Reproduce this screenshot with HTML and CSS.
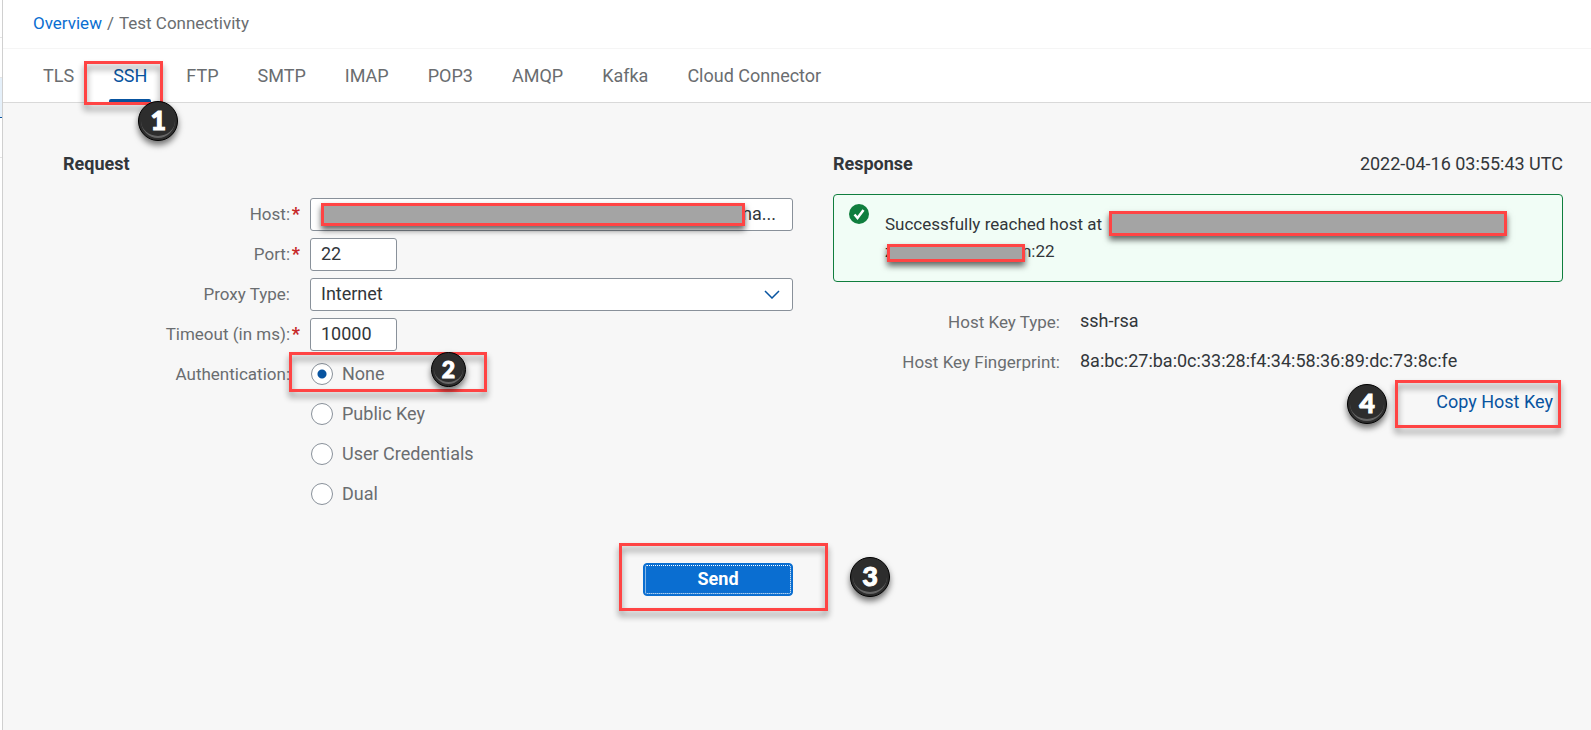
FILE: index.html
```html
<!DOCTYPE html>
<html lang="en">
<head>
<meta charset="utf-8">
<meta name="viewport" content="width=device-width, initial-scale=1">
<title>Test Connectivity</title>
<link rel="stylesheet" href="styles.css">
</head>
<body>
<div class="shell">
  <div class="side">
    <div class="side-item side-item-top"></div>
    <div class="side-item"></div>
    <div class="side-item side-item-active"></div>
    <div class="side-item"></div>
  </div>
  <div class="page">
    <nav class="breadcrumb" aria-label="Breadcrumb">
      <a class="crumb-link" href="#">Overview</a><span>/</span><span>Test Connectivity</span>
    </nav>
    <nav class="tabs" aria-label="Protocols">
      <a class="tab" href="#">TLS</a>
      <a class="tab tab-active" href="#" aria-current="page">SSH<span class="frame frame-tab"></span><span class="badge badge-tab">1</span></a>
      <a class="tab" href="#">FTP</a>
      <a class="tab" href="#">SMTP</a>
      <a class="tab" href="#">IMAP</a>
      <a class="tab" href="#">POP3</a>
      <a class="tab" href="#">AMQP</a>
      <a class="tab" href="#">Kafka</a>
      <a class="tab" href="#">Cloud Connector</a>
    </nav>
    <main class="content">
      <section class="panel">
        <header class="panel-head"><h2 class="panel-title">Request</h2></header>
        <form class="form">
          <label class="label required" for="host">Host:</label>
          <div class="field">
            <input class="input input-host" id="host" type="text" value="ma...">
            <span class="redaction redaction-host"></span>
          </div>
          <label class="label required" for="port">Port:</label>
          <div class="field"><input class="input input-short" id="port" type="text" value="22"></div>
          <label class="label" for="proxy">Proxy Type:</label>
          <div class="field select-wrap">
            <select class="input select" id="proxy"><option>Internet</option></select>
            <svg class="chevron" viewBox="0 0 16 9" aria-hidden="true"><path d="M1 1 8 8l7-7"/></svg>
          </div>
          <label class="label required" for="timeout">Timeout (in ms):</label>
          <div class="field"><input class="input input-short" id="timeout" type="text" value="10000"></div>
          <span class="label" id="auth-label">Authentication:</span>
          <div class="radios" role="radiogroup" aria-labelledby="auth-label">
            <label class="option"><input class="radio" type="radio" name="auth" checked>None</label>
            <label class="option"><input class="radio" type="radio" name="auth">Public Key</label>
            <label class="option"><input class="radio" type="radio" name="auth">User Credentials</label>
            <label class="option"><input class="radio" type="radio" name="auth">Dual</label>
            <span class="frame frame-auth"></span><span class="badge badge-small badge-auth">2</span>
          </div>
          <div class="actions">
            <button class="send" type="button">Send</button>
            <span class="frame frame-send"></span><span class="badge badge-send">3</span>
          </div>
        </form>
      </section>
      <section class="panel">
        <header class="panel-head"><h2 class="panel-title">Response</h2><time datetime="2022-04-16T03:55:43Z">2022-04-16 03:55:43 UTC</time></header>
        <div class="message" role="status">
          <svg class="message-icon" viewBox="0 0 20 20" aria-hidden="true"><circle cx="10" cy="10" r="10"/><path d="m5.5 10.5 3 3.5 6-8"/></svg>
          <div class="message-text">
            <p class="line">Successfully reached host at <span class="redaction redaction-long"></span></p>
            <p class="line">z<span class="redaction redaction-mid"></span>m:22</p>
          </div>
        </div>
        <dl class="details">
          <dt class="label">Host Key Type:</dt><dd class="value">ssh-rsa</dd>
          <dt class="label">Host Key Fingerprint:</dt><dd class="value">8a:bc:27:ba:0c:33:28:f4:34:58:36:89:dc:73:8c:fe</dd>
        </dl>
        <div class="copy-row">
          <button class="copy" type="button">Copy Host Key</button>
          <span class="frame frame-copy"></span><span class="badge badge-copy">4</span>
        </div>
      </section>
    </main>
  </div>
</div>
</body>
</html>
```
FILE: styles.css
```css
* { box-sizing: border-box; }

body {
  margin: 0;
  background: #f7f7f7;
  color: #32363a;
  font: 18px/24px Roboto, "Liberation Sans", sans-serif;
}

.shell { display: flex; min-height: 100vh; }

.side {
  flex: 0 0 3px;
  border-right: 1px solid #d0d0d0;
  background: #fff;
}
.side-item { height: 40px; border-bottom: 1px solid #e5e5e5; }
.side-item-top { height: 38px; }
.side-item-active { background: #e5f0fa; border-color: #0854a0; }

.page { flex: 1; min-width: 0; }

.breadcrumb {
  display: flex;
  align-items: center;
  gap: 5px;
  height: 49px;
  padding: 0 30px 2px;
  border-bottom: 1px solid #f5f5f5;
  background: #fff;
  color: #6a6d70;
  font-size: 17px;
}
.crumb-link { color: #0a6ed1; text-decoration: none; }

.tabs {
  display: flex;
  gap: 31px;
  height: 54px;
  padding: 0 36px;
  border-bottom: 1px solid #d9d9d9;
  background: #fff;
}
.tab {
  position: relative;
  padding: 15px 4px 11px;
  border-bottom: 3px solid transparent;
  color: #6a6d70;
  text-decoration: none;
  white-space: nowrap;
}
.tab-active { color: #0854a0; }
.tab-active::before {
  content: "";
  position: absolute;
  inset: auto 0 -3px;
  height: 3px;
  border-radius: 2px 2px 0 0;
  background: #0854a0;
}

.content {
  display: grid;
  grid-template-columns: repeat(2, minmax(0, 1fr));
  gap: 40px;
  padding: 44px 28px 44px 60px;
}

.panel-head {
  display: flex;
  align-items: center;
  justify-content: space-between;
  height: 33px;
  margin-bottom: 14px;
}
.panel-title { margin: 0; font-size: 18px; font-weight: 700; }

.form, .details {
  display: grid;
  grid-template-columns: minmax(140px, 247px) minmax(0, 1fr);
  row-gap: 7px;
}
.form { padding-top: 4px; }
.details { margin: 24px 0 7px; }

.label {
  position: relative;
  height: 33px;
  padding-right: 20px;
  color: #6a6d70;
  font-size: 17px;
  line-height: 32px;
  text-align: right;
}
.required::after {
  content: "*";
  position: absolute;
  right: 10px;
  color: #c62828;
  font-size: 18px;
  font-weight: 700;
}
.value { margin: 0; line-height: 30px; }
.field { position: relative; height: 33px; }

.input {
  display: block;
  width: 100%;
  height: 33px;
  padding: 0 10px 2px;
  border: 1px solid #89919a;
  border-radius: 3px;
  background: #fff;
  color: #32363a;
  font: inherit;
}
.input-short { width: 87px; }
.input-host { padding-right: 16px; text-align: right; }

.select-wrap { display: grid; align-items: center; }
.select, .chevron { grid-area: 1 / 1; }
.select { appearance: none; }
.chevron {
  justify-self: end;
  width: 16px;
  height: 9px;
  margin-right: 13px;
  fill: none;
  stroke: #0854a0;
  stroke-width: 1.5;
  pointer-events: none;
}

.radios {
  position: relative;
  display: grid;
  row-gap: 7px;
  justify-items: start;
}
.option {
  display: flex;
  align-items: center;
  gap: 9px;
  height: 33px;
  padding-bottom: 1px;
  color: #6a6d70;
}
.radio {
  appearance: none;
  width: 22px;
  height: 22px;
  margin: 0 0 0 1px;
  border: 1px solid #89919a;
  border-radius: 50%;
  background: #fff;
}
.radio:checked { background: radial-gradient(circle, #0854a0 4px, #fff 5px); }

.actions {
  position: relative;
  grid-column: 1 / -1;
  justify-self: end;
  width: 150px;
  margin-top: 45px;
}
.send {
  display: block;
  width: 100%;
  height: 33px;
  padding: 0 0 2px;
  border: 1px solid #0a6ed1;
  border-radius: 4px;
  background: #0a6ed1;
  color: #fff;
  font: inherit;
  font-weight: 700;
  outline: 1px dotted #fff;
  outline-offset: -3px;
}

.message {
  display: flex;
  gap: 16px;
  padding: 9px 15px 16px;
  border: 1px solid #107e3e;
  border-radius: 4px;
  background: #f1fdf6;
}
.message-icon { flex: none; width: 20px; height: 20px; fill: #107e3e; }
.message-icon path { fill: none; stroke: #fff; stroke-width: 2.5; }
.message-text { flex: 1; min-width: 0; padding-top: 7px; }
.line { margin: 0; height: 27px; font-size: 17px; line-height: 27px; white-space: nowrap; }

.copy-row { position: relative; display: flex; justify-content: flex-end; }
.copy {
  height: 33px;
  padding: 0 10px 2px;
  border: 0;
  background: none;
  color: #0854a0;
  font: inherit;
}

/* Walkthrough callouts */
.redaction {
  display: inline-block;
  border: 3px solid #ff4444;
  background: #a4a4a4;
  box-shadow: 0 4px 6px rgba(0, 0, 0, .6);
}
.redaction-host { position: absolute; inset: 5px 48px 5px 11px; }
.redaction-long { width: 398px; height: 25px; margin-left: 3px; vertical-align: -6px; }
.redaction-mid { position: relative; width: 138px; height: 18px; margin: 0 -9px 0 -6px; vertical-align: middle; }

.frame {
  position: absolute;
  border: 3px solid #ff4444;
  filter: drop-shadow(0 5px 3px rgba(0, 0, 0, .45));
  pointer-events: none;
}
.frame-tab { inset: 12px -12px -6px -25px; }
.frame-auth { top: -6px; left: -21px; width: 198px; height: 40px; }
.frame-send { inset: -20px -35px -15px -24px; }
.frame-copy { top: -6px; right: 2px; width: 166px; height: 48px; }

.badge {
  position: absolute;
  display: grid;
  place-items: center;
  width: 40px;
  height: 40px;
  padding-bottom: 2px;
  border: 1px solid #000;
  border-radius: 50%;
  background: #2d2d2d;
  box-shadow: 0 4px 6px rgba(0, 0, 0, .55);
  color: #fff;
  font: 900 27px/28px Lato, sans-serif;
  -webkit-text-stroke: 1px #fff;
}
.badge::after {
  content: "";
  position: absolute;
  inset: 2px;
  border-bottom: 2px solid #666;
  border-radius: 50%;
}
.badge-small { width: 35px; height: 35px; font-size: 23px; }
.badge-tab { top: 52px; right: -27px; }
.badge-auth { top: -6px; left: 121px; }
.badge-send { top: -6px; left: 207px; }
.badge-copy { top: -2px; right: 176px; }
```
